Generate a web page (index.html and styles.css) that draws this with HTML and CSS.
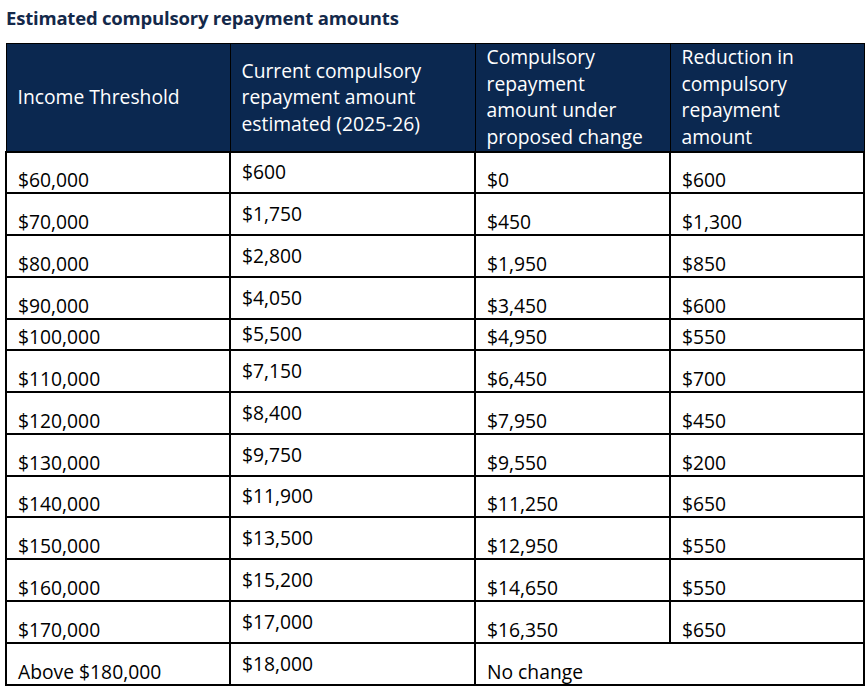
FILE: index.html
```html
<!DOCTYPE html>
<html lang="en">
<head>
<meta charset="utf-8">
<title>Estimated compulsory repayment amounts</title>
<link rel="stylesheet" href="styles.css">
</head>
<body>
<div class="page">
  <h1 class="title">Estimated compulsory repayment amounts</h1>
  <table class="rep">
    <colgroup>
      <col class="c1"><col class="c2"><col class="c3"><col class="c4">
    </colgroup>
    <thead>
      <tr class="head">
        <th>Income Threshold</th>
        <th>Current compulsory repayment amount estimated (2025-26)</th>
        <th>Compulsory repayment amount under proposed change</th>
        <th>Reduction in compulsory repayment amount</th>
      </tr>
    </thead>
    <tbody>
      <tr><td>$60,000</td><td class="mid">$600</td><td>$0</td><td>$600</td></tr>
      <tr><td>$70,000</td><td class="mid">$1,750</td><td>$450</td><td>$1,300</td></tr>
      <tr><td>$80,000</td><td class="mid">$2,800</td><td>$1,950</td><td>$850</td></tr>
      <tr><td>$90,000</td><td class="mid">$4,050</td><td>$3,450</td><td>$600</td></tr>
      <tr class="short"><td>$100,000</td><td class="mid">$5,500</td><td>$4,950</td><td>$550</td></tr>
      <tr><td>$110,000</td><td class="mid">$7,150</td><td>$6,450</td><td>$700</td></tr>
      <tr><td>$120,000</td><td class="mid">$8,400</td><td>$7,950</td><td>$450</td></tr>
      <tr><td>$130,000</td><td class="mid">$9,750</td><td>$9,550</td><td>$200</td></tr>
      <tr><td>$140,000</td><td class="mid">$11,900</td><td>$11,250</td><td>$650</td></tr>
      <tr><td>$150,000</td><td class="mid">$13,500</td><td>$12,950</td><td>$550</td></tr>
      <tr><td>$160,000</td><td class="mid">$15,200</td><td>$14,650</td><td>$550</td></tr>
      <tr><td>$170,000</td><td class="mid">$17,000</td><td>$16,350</td><td>$650</td></tr>
      <tr><td>Above $180,000</td><td class="mid">$18,000</td><td colspan="2">No change</td></tr>
    </tbody>
  </table>
</div>
</body>
</html>
```

FILE: styles.css
```css
html, body {
  margin: 0;
  padding: 0;
  background: #ffffff;
}

.page {
  padding: 0 0 0 5px;
  font-family: "Open Sans", "Noto Sans", sans-serif;
  color: #000;
}

.title {
  margin: 0 0 13px 1px;
  padding-top: 6px;
  font-size: 18.5px;
  line-height: 24px;
  font-weight: 700;
  color: #14294a;
  letter-spacing: -0.2px;
}

.rep {
  border-collapse: collapse;
  table-layout: fixed;
  width: 858px;
}

.c1 { width: 224px; }
.c2 { width: 245px; }
.c3 { width: 195px; }
.c4 { width: 194px; }

.head {
  height: 108px;
}

.head th {
  background: #0b2850;
  color: #ffffff;
  font-weight: 400;
  font-size: 19.3px;
  line-height: 26.5px;
  text-align: left;
  vertical-align: middle;
  padding: 0 14px 0 11px;
  border: 1px solid #000;
}

.rep tbody tr {
  height: 41.8px;
}

.rep tbody tr.short {
  height: 31.5px;
}

.rep td {
  font-size: 19.3px;
  line-height: 23px;
  vertical-align: bottom;
  padding: 0 8px 1px 11px;
  border: 2px solid #000;
}

.rep td.mid {
  vertical-align: middle;
}
```
